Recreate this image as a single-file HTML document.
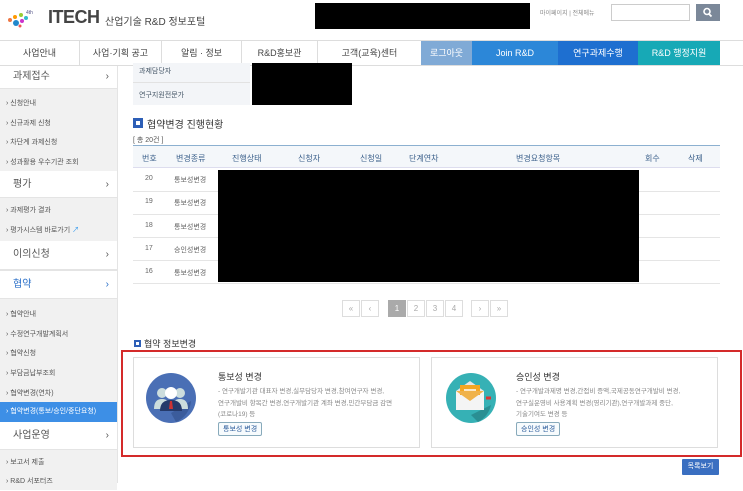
<!DOCTYPE html><html><head><meta charset="utf-8"><style>
*{margin:0;padding:0;box-sizing:border-box}
body{width:743px;height:483px;overflow:hidden;background:#fff;font-family:"Liberation Sans","Noto Sans CJK KR",sans-serif;color:#333;position:relative;font-size:8px}
.a{position:absolute;white-space:nowrap}
.nav{position:absolute;top:40px;left:0;width:743px;height:26px;border-top:1px solid #ddd;border-bottom:1px solid #ddd}
.nav div{position:absolute;top:0;height:24px;line-height:24px;text-align:center;font-size:9px;color:#444}
.sb{position:absolute;left:0;width:117px}
.h{background:#fff;font-size:10px;color:#555;padding-left:13px;border-bottom:1px solid #e4e4e4}
.h span{position:absolute;right:8px}
.s{background:#f1f1f1;font-size:7px;color:#555;padding-left:6px}
th,td{font-weight:normal}
.pg{position:absolute;top:300px;width:18px;height:17px;border:1px solid #ddd;text-align:center;line-height:15px;color:#aaa;font-size:8px}
.card{position:absolute;top:357px;width:287px;height:91px;border:1px solid #ddd;background:#fff}
.btn{position:absolute;left:84px;top:64px;border:1px solid #8ab;border-radius:2px;padding:1px 4px;font-size:7px;color:#2d5d9c;background:#f7fbfd}
</style></head><body>
<div class="a" style="left:6px;top:8px;width:28px;height:18px">
<svg width="30" height="20"><g fill="#e74"><circle cx="4" cy="12" r="2"/></g><circle cx="9" cy="9" r="2" fill="#f90"/><circle cx="10" cy="15" r="3" fill="#28c"/><circle cx="15" cy="7" r="2" fill="#9c3"/><circle cx="16" cy="13" r="2" fill="#c3c"/><circle cx="20" cy="10" r="2" fill="#3bc"/><circle cx="14" cy="18" r="1.5" fill="#e55"/><text x="20" y="6" font-size="5" fill="#558">4th</text></svg></div>
<div class="a" style="left:48px;top:7px;font-size:18px;font-weight:bold;color:#444;letter-spacing:-0.5px">ITECH</div>
<div class="a" style="left:105px;top:13px;font-size:10px;color:#444">산업기술 R&amp;D 정보포털</div>
<div class="a" style="left:315px;top:3px;width:215px;height:26px;background:#000"></div>
<div class="a" style="left:540px;top:8px;font-size:6px;color:#888">마이페이지 | 전체메뉴</div>
<div class="a" style="left:611px;top:4px;width:79px;height:17px;border:1px solid #ccc"></div>
<div class="a" style="left:696px;top:4px;width:24px;height:17px;background:#7b8899"><svg width="24" height="17"><circle cx="11" cy="7.5" r="3" stroke="#fff" stroke-width="1.6" fill="none"/><path d="M13 10l2.5 2.5" stroke="#fff" stroke-width="1.8"/></svg></div>
<div class="nav">
<div style="left:0;width:80px;border-right:1px solid #ddd">사업안내</div>
<div style="left:80px;width:82px;border-right:1px solid #ddd">사업·기획 공고</div>
<div style="left:162px;width:80px;border-right:1px solid #ddd">알림 · 정보</div>
<div style="left:242px;width:76px;border-right:1px solid #ddd">R&amp;D홍보관</div>
<div style="left:318px;width:103px">고객(교육)센터</div>
<div style="left:421px;width:51px;background:#80aad6;color:#fff">로그아웃</div>
<div style="left:472px;width:86px;background:#2c87d8;color:#fff">Join R&amp;D</div>
<div style="left:558px;width:80px;background:#1e6fd0;color:#fff">연구과제수행</div>
<div style="left:638px;width:82px;background:#17a9b6;color:#fff">R&amp;D 행정지원</div>
</div>
<div class="a" style="left:117px;top:66px;width:1px;height:417px;background:#e4e4e4"></div>
<div class="sb" style="top:66px">
<div class="h" style="height:23px;line-height:22px;position:relative">과제접수<span>›</span></div>
<div class="s" style="height:82px;padding-top:5px;line-height:19.5px">› 신청안내<br>› 신규과제 신청<br>› 차단계 과제신청<br>› 성과활용 우수기관 조회</div>
<div class="h" style="height:27px;line-height:27px;position:relative">평가<span>›</span></div>
<div class="s" style="height:43px;padding-top:3px;line-height:20px">› 과제평가 결과<br>› 평가시스템 바로가기 <span style="color:#39e">↗</span></div>
<div class="h" style="height:29px;line-height:28px;position:relative">이의신청<span>›</span></div>
<div class="h" style="height:29px;line-height:28px;position:relative;color:#2a6fc8;border-top:1px solid #e4e4e4">협약<span>›</span></div>
<div class="s" style="height:103px;padding-top:6px;line-height:19.7px">› 협약안내<br>› 수정연구개발계획서<br>› 협약신청<br>› 부담금납부조회<br>› 협약변경(연차)</div>
<div class="s" style="height:20px;line-height:20px;background:#3d8fe6;color:#fff">› 협약변경(통보/승인/중단요청)</div>
<div class="h" style="height:28px;line-height:28px;position:relative">사업운영<span>›</span></div>
<div class="s" style="height:40px;padding-top:3px;line-height:19px">› 보고서 제출<br>› R&amp;D 서포터즈</div>
</div>
<div class="a" style="left:133px;top:63px;width:117px;height:19px;background:#f3f5f8;font-size:7px;color:#456;padding:3px 0 0 6px">과제담당자</div>
<div class="a" style="left:133px;top:82px;width:117px;height:23px;background:#f3f5f8;border-top:1px solid #e2e2e2;font-size:7px;color:#456;padding:7px 0 0 6px">연구지원전문가</div>
<div class="a" style="left:252px;top:63px;width:100px;height:42px;background:#000"></div>
<div class="a" style="left:133px;top:118px;width:10px;height:10px;background:#2d5fb7;border:2px solid #2d5fb7"><div style="margin:1px;width:4px;height:4px;background:#fff"></div></div>
<div class="a" style="left:147px;top:116px;font-size:10px;color:#333">협약변경 진행현황</div>
<div class="a" style="left:133px;top:135px;font-size:7px;color:#555">[ 총 20건 ]</div>
<div class="a" style="left:133px;top:145px;width:587px;height:1.5px;background:#8cb0d0"></div>
<div class="a" style="left:133px;top:146px;width:587px;height:22px;background:#f4f7fa;border-bottom:1px solid #dde"></div>
<div class="a" style="top:153px;left:0;font-size:8px;color:#3a5f8a">
<span class="a" style="left:142px">번호</span><span class="a" style="left:176px">변경종류</span><span class="a" style="left:232px">진행상태</span><span class="a" style="left:298px">신청자</span><span class="a" style="left:360px">신청일</span><span class="a" style="left:409px">단계연차</span><span class="a" style="left:516px">변경요청항목</span><span class="a" style="left:645px">회수</span><span class="a" style="left:688px">삭제</span></div>
<div class="a" style="left:0;top:0;font-size:7px;color:#666">
<span class="a" style="left:145px;top:175px">20</span><span class="a" style="left:174px;top:175px">통보성변경</span>
<span class="a" style="left:145px;top:198px">19</span><span class="a" style="left:174px;top:198px">통보성변경</span>
<span class="a" style="left:145px;top:222px">18</span><span class="a" style="left:174px;top:222px">통보성변경</span>
<span class="a" style="left:145px;top:245px">17</span><span class="a" style="left:174px;top:245px">승인성변경</span>
<span class="a" style="left:145px;top:268px">16</span><span class="a" style="left:174px;top:268px">통보성변경</span></div>
<div class="a" style="left:133px;top:191px;width:587px;height:1px;background:#e5e5e5"></div>
<div class="a" style="left:133px;top:214px;width:587px;height:1px;background:#e5e5e5"></div>
<div class="a" style="left:133px;top:237px;width:587px;height:1px;background:#e5e5e5"></div>
<div class="a" style="left:133px;top:260px;width:587px;height:1px;background:#e5e5e5"></div>
<div class="a" style="left:133px;top:283px;width:587px;height:1px;background:#e5e5e5"></div>
<div class="a" style="left:218px;top:170px;width:421px;height:112px;background:#000"></div>
<div class="pg" style="left:342px">«</div><div class="pg" style="left:361px">‹</div>
<div class="pg" style="left:388px;background:#aaa;border-color:#aaa;color:#fff">1</div><div class="pg" style="left:407px">2</div><div class="pg" style="left:426px">3</div><div class="pg" style="left:445px">4</div>
<div class="pg" style="left:471px">›</div><div class="pg" style="left:490px">»</div>
<div class="a" style="left:134px;top:340px;width:7px;height:7px;background:#2d5fb7;border:1px solid #2d5fb7"><div style="margin:1px;width:3px;height:3px;background:#fff"></div></div>
<div class="a" style="left:144px;top:337px;font-size:9px;color:#333">협약 정보변경</div>
<div class="a" style="left:121px;top:350px;width:621px;height:107px;border:2px solid #d42a2a"></div>
<div class="card" style="left:133px">
<svg class="a" style="left:12px;top:15px" width="52" height="52"><circle cx="25" cy="25" r="25" fill="#4a6fb5"/><path d="M25 40L45 28A25 25 0 0 1 30 49z" fill="#3b5c9c"/><circle cx="16" cy="20" r="5" fill="#cdd"/><circle cx="34" cy="20" r="5" fill="#cdd"/><path d="M8 36q0-10 8-10t8 10zM26 36q0-10 8-10t8 10z" fill="#cdd"/><circle cx="25" cy="20" r="6" fill="#fff"/><path d="M14 38q0-11 11-11t11 11z" fill="#253a6a"/><path d="M24 28h2l1 8h-4z" fill="#c33"/></svg>
<div class="a" style="left:84px;top:12px;font-size:9px;color:#333">통보성 변경</div>
<div class="a" style="left:84px;top:28px;font-size:6.5px;color:#888;line-height:11.5px">- 연구개발기관 대표자 변경,실무담당자 변경,참여연구자 변경,<br>연구개발비 항목간 변경,연구개발기관 계좌 변경,민간부담금 감면<br>(코로나19) 등</div>
<div class="btn">통보성 변경</div></div>
<div class="card" style="left:431px">
<svg class="a" style="left:14px;top:15px" width="52" height="52"><circle cx="25" cy="25" r="25" fill="#36b1b5"/><path d="M25 42L45 32A25 25 0 0 1 32 49z" fill="#2a8f93"/><rect x="10" y="18" width="28" height="19" fill="#f4f4f4"/><path d="M10 18l14-10 14 10z" fill="#e6e6e6"/><rect x="14" y="12" width="20" height="10" fill="#f5a623"/><path d="M18 17h12" stroke="#fff" stroke-width="1.5"/><path d="M10 18l14 10 14-10" fill="#f0b24a"/><path d="M40 25h5" stroke="#d33" stroke-width="3"/></svg>
<div class="a" style="left:84px;top:12px;font-size:9px;color:#333">승인성 변경</div>
<div class="a" style="left:84px;top:28px;font-size:6.5px;color:#888;line-height:11.5px">- 연구개발과제명 변경,간접비 증액,국제공동연구개발비 변경,<br>연구실운영비 사용계획 변경(영리기관),연구개발과제 중단,<br>기술기여도 변경 등</div>
<div class="btn">승인성 변경</div></div>
<div class="a" style="left:682px;top:459px;width:37px;height:16px;background:#3a6fc1;color:#fff;font-size:7px;text-align:center;line-height:16px;border-radius:1px">목록보기</div>
</body></html>
